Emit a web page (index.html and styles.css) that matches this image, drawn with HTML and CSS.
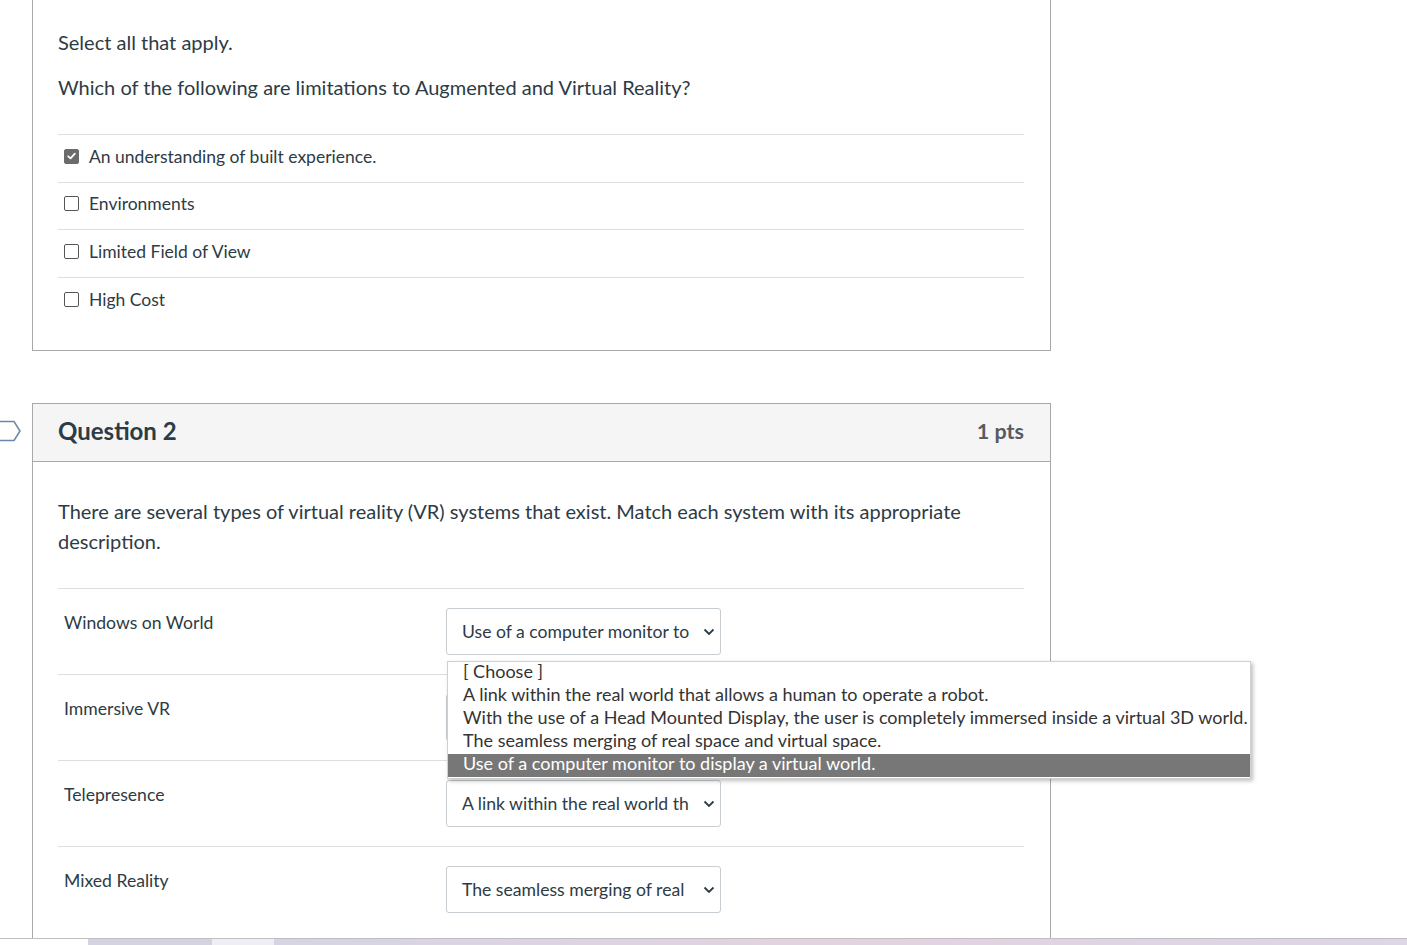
FILE: index.html
```html
<!DOCTYPE html>
<html lang="en">
<head>
<meta charset="utf-8">
<title>Quiz</title>
<link rel="stylesheet" href="styles.css">
</head>
<body>
<main class="quiz">
  <section class="card card-first">
    <div class="card-body">
      <p class="q-text">Select all that apply.</p>
      <p class="q-text">Which of the following are limitations to Augmented and Virtual Reality?</p>
      <ul class="answers">
        <li class="answer"><span class="box checked"><svg viewBox="0 0 14 14" width="14" height="14"><path d="M3.5 7.3 L6 9.6 L10.6 4.4" fill="none" stroke="#fff" stroke-width="1.9" stroke-linecap="round" stroke-linejoin="round"/></svg></span>An understanding of built experience.</li>
        <li class="answer"><span class="box"></span>Environments</li>
        <li class="answer"><span class="box"></span>Limited Field of View</li>
        <li class="answer"><span class="box"></span>High Cost</li>
      </ul>
    </div>
  </section>

  <section class="card card-second">
    <span class="flag"><svg viewBox="0 0 22 22" width="22" height="22"><path d="M-2 1.5 H14 L20 11 L14 20.5 H-2" fill="#fff" stroke="#6b87a8" stroke-width="1.5" stroke-linejoin="round"/></svg></span>
    <header class="card-head">
      <h2 class="q-title">Question 2</h2>
      <span class="pts">1 pts</span>
    </header>
    <div class="card-body card-body-2">
      <p class="q-text">There are several types of virtual reality (VR) systems that exist. Match each system with its appropriate description.</p>
      <div class="matches">
        <div class="match">
          <div class="match-label">Windows on World</div>
          <div class="match-select">
            <div class="select">Use of a computer monitor to<span class="chev"><svg viewBox="0 0 12 8" width="12" height="8"><path d="M1.5 1.5 L6 6 L10.5 1.5" fill="none" stroke="#2d3b45" stroke-width="1.8"/></svg></span></div>
            <ul class="dropdown">
              <li>[ Choose ]</li>
              <li>A link within the real world that allows a human to operate a robot.</li>
              <li>With the use of a Head Mounted Display, the user is completely immersed inside a virtual 3D world.</li>
              <li>The seamless merging of real space and virtual space.</li>
              <li class="selected">Use of a computer monitor to display a virtual world.</li>
            </ul>
          </div>
        </div>
        <div class="match">
          <div class="match-label">Immersive VR</div>
          <div class="match-select">
            <div class="select" aria-hidden="true"><span class="chev"><svg viewBox="0 0 12 8" width="12" height="8"><path d="M1.5 1.5 L6 6 L10.5 1.5" fill="none" stroke="#2d3b45" stroke-width="1.8"/></svg></span></div>
          </div>
        </div>
        <div class="match">
          <div class="match-label">Telepresence</div>
          <div class="match-select">
            <div class="select">A link within the real world th<span class="chev"><svg viewBox="0 0 12 8" width="12" height="8"><path d="M1.5 1.5 L6 6 L10.5 1.5" fill="none" stroke="#2d3b45" stroke-width="1.8"/></svg></span></div>
          </div>
        </div>
        <div class="match">
          <div class="match-label">Mixed Reality</div>
          <div class="match-select">
            <div class="select">The seamless merging of real<span class="chev"><svg viewBox="0 0 12 8" width="12" height="8"><path d="M1.5 1.5 L6 6 L10.5 1.5" fill="none" stroke="#2d3b45" stroke-width="1.8"/></svg></span></div>
          </div>
        </div>
      </div>
    </div>
  </section>
</main>
<div class="bottom-strip">
  <span class="seg seg-a"></span><span class="seg seg-b"></span><span class="seg seg-c"></span>
</div>
</body>
</html>
```

FILE: styles.css
```css
html, body {
  margin: 0;
  padding: 0;
  background: #fff;
}
body {
  font-family: Lato, "Open Sans", "Liberation Sans", sans-serif;
  color: #2d3b45;
  overflow: hidden;
  height: 945px;
}
.quiz {
  width: 1019px;
  margin-left: 32px;
}
.card {
  border: 1px solid #a9a9a9;
  background: #fff;
  position: relative;
}
.card-first {
  border-top: none;
}
.card-body {
  padding: 27px 26px 26px 25px;
}
.q-text {
  margin: 0 0 15px;
  font-size: 20px;
  line-height: 30px;
}
.answers {
  list-style: none;
  margin: 32px 0 0;
  padding: 0;
}
.answer {
  display: flex;
  align-items: center;
  box-sizing: border-box;
  height: 47.6px;
  padding-bottom: 4px;
  border-top: 1px solid #dcdfe1;
  font-size: 17.5px;
  padding-left: 6px;
}
.box {
  box-sizing: border-box;
  width: 15px;
  height: 15px;
  border: 1px solid #555;
  border-radius: 2px;
  margin-right: 10px;
  display: inline-flex;
  align-items: center;
  justify-content: center;
  background: #fff;
}
.box.checked {
  background: #6b6b6b;
  border-color: #6b6b6b;
}
.card-second {
  margin-top: 52px;
  border-bottom: none;
}
.flag {
  position: absolute;
  left: -33px;
  top: 16px;
  display: block;
  line-height: 0;
}
.card-head {
  display: flex;
  align-items: center;
  justify-content: space-between;
  box-sizing: border-box;
  height: 58px;
  padding: 0 26px 4px 25px;
  background: #f5f5f5;
  border-bottom: 1px solid #a9a9a9;
}
.q-title {
  margin: 0;
  font-size: 24px;
  font-weight: 700;
  color: #2d3b45;
}
.pts {
  font-size: 21.5px;
  font-weight: 700;
  color: #555b60;
}
.card-body-2 {
  padding-top: 34px;
  padding-bottom: 40px;
}
.card-body-2 .q-text {
  margin-bottom: 32px;
}
.matches {
  display: flex;
  flex-direction: column;
}
.match {
  display: grid;
  grid-template-columns: 388px 1fr;
  border-top: 1px solid #dcdfe1;
  padding: 19px 0 19px;
  height: 47px;
}
.match-label {
  font-size: 17.6px;
  padding: 4px 0 0 6px;
}
.match-select {
  position: relative;
}
.select {
  box-sizing: border-box;
  width: 275px;
  height: 47px;
  border: 1px solid #c7cdd1;
  border-radius: 3px;
  background: #fff;
  font-size: 17.6px;
  display: flex;
  align-items: center;
  padding: 0 10px 1px 15px;
  white-space: nowrap;
  overflow: hidden;
  position: relative;
}
.chev {
  position: absolute;
  right: 5px;
  top: 19px;
  line-height: 0;
  background: #fff;
  padding-left: 6px;
}
.dropdown {
  position: absolute;
  left: 1px;
  top: 53px;
  z-index: 5;
  list-style: none;
  margin: 0;
  padding: 0 0 1px;
  width: 802px;
  background: #fff;
  border: 1px solid #d0d0d0;
  box-shadow: 2px 2px 4px rgba(0,0,0,0.25);
  font-size: 18px;
  color: #333;
}
.dropdown li {
  height: 23px;
  line-height: 19px;
  padding-left: 15px;
  white-space: nowrap;
}
.dropdown li.selected {
  background: #777;
  color: #fff;
}
.bottom-strip {
  position: fixed;
  left: 0;
  bottom: 0;
  width: 1407px;
  height: 6px;
  display: flex;
  border-top: 1px solid #bfbfbf;
  background: #fff;
}
.seg {
  display: block;
  height: 6px;
}
.seg-a {
  margin-left: 88px;
  width: 124px;
  background: #d3d3e2;
}
.seg-b {
  width: 62px;
  background: #eeeef4;
}
.seg-c {
  flex: 1;
  background: linear-gradient(90deg, #d6d4e4, #e3d3e0 50%, #dcd6e6);
}
```
